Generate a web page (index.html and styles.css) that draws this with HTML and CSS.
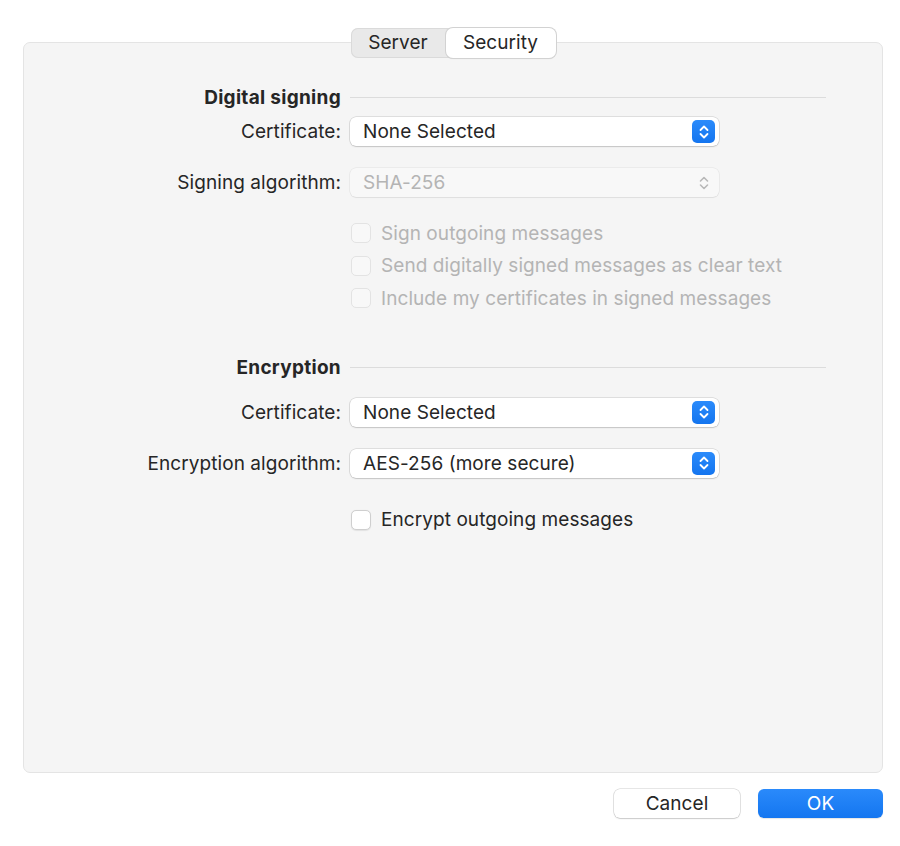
FILE: index.html
```html
<!DOCTYPE html>
<html>
<head>
<meta charset="utf-8">
<link rel="stylesheet" href="styles.css">
</head>
<body>
<div class="window">
  <div class="tabs">
    <div class="tab">Server</div>
    <div class="tab selected">Security</div>
  </div>
  <div class="box">
    <div class="form">
      <div class="section-title">Digital signing</div>
      <div class="rule"></div>

      <div class="label r-cert1">Certificate:</div>
      <div class="popup r-cert1"><span>None Selected</span><span class="stepper"><svg width="12" height="16" viewBox="0 0 12 16"><path d="M2.5 6 L6 2.5 L9.5 6 M2.5 10 L6 13.5 L9.5 10" fill="none" stroke="#fff" stroke-width="1.8" stroke-linecap="round" stroke-linejoin="round"/></svg></span></div>

      <div class="label r-sig">Signing algorithm:</div>
      <div class="popup disabled r-sig"><span>SHA-256</span><span class="stepper plain"><svg width="12" height="16" viewBox="0 0 12 16"><path d="M2.5 6 L6 2.5 L9.5 6 M2.5 10 L6 13.5 L9.5 10" fill="none" stroke="#b8b8b8" stroke-width="1.6" stroke-linecap="round" stroke-linejoin="round"/></svg></span></div>

      <div class="check disabled r-cb1"><span class="box-cb"></span>Sign outgoing messages</div>
      <div class="check disabled"><span class="box-cb"></span>Send digitally signed messages as clear text</div>
      <div class="check disabled"><span class="box-cb"></span>Include my certificates in signed messages</div>

      <div class="section-title r-enc">Encryption</div>
      <div class="rule r-enc"></div>

      <div class="label r-cert2">Certificate:</div>
      <div class="popup r-cert2"><span>None Selected</span><span class="stepper"><svg width="12" height="16" viewBox="0 0 12 16"><path d="M2.5 6 L6 2.5 L9.5 6 M2.5 10 L6 13.5 L9.5 10" fill="none" stroke="#fff" stroke-width="1.8" stroke-linecap="round" stroke-linejoin="round"/></svg></span></div>

      <div class="label r-alg">Encryption algorithm:</div>
      <div class="popup r-alg"><span>AES-256 (more secure)</span><span class="stepper"><svg width="12" height="16" viewBox="0 0 12 16"><path d="M2.5 6 L6 2.5 L9.5 6 M2.5 10 L6 13.5 L9.5 10" fill="none" stroke="#fff" stroke-width="1.8" stroke-linecap="round" stroke-linejoin="round"/></svg></span></div>

      <div class="check r-cb2"><span class="box-cb"></span>Encrypt outgoing messages</div>
    </div>
  </div>
  <div class="buttons">
    <div class="btn">Cancel</div>
    <div class="btn primary">OK</div>
  </div>
</div>
</body>
</html>
```

FILE: styles.css
```css
html, body {
  margin: 0;
  padding: 0;
  background: #ffffff;
}
body {
  font-family: Inter, "Liberation Sans", sans-serif;
  font-size: 19px;
  letter-spacing: 0.07px;
  color: #262626;
}
.window {
  width: 900px;
  height: 846px;
  box-sizing: border-box;
  padding: 28px 17px 0 23px;
  display: flex;
  flex-direction: column;
}
.tabs {
  align-self: center;
  display: flex;
  height: 30px;
  box-sizing: border-box;
  background: #e9e9e9;
  border-radius: 7px;
  box-shadow: inset 0 0 0 1px #dadada;
  margin-bottom: -16px;
  position: relative;
  z-index: 1;
}
.tab {
  display: flex;
  align-items: center;
  justify-content: center;
  width: 95px;
  line-height: 30px;
}
.tab.selected {
  width: 110px;
  background: #ffffff;
  border-radius: 7px;
  box-shadow: 0 0 0 1px #d2d2d2, 0 1px 1px rgba(0,0,0,0.12);
}
.box {
  height: 731px;
  box-sizing: border-box;
  background: #f5f5f5;
  border: 1px solid #e4e4e4;
  border-radius: 7px;
  padding: 43px 56px 0 0;
}
.form {
  display: grid;
  grid-template-columns: 317px 1fr;
  column-gap: 9px;
  align-items: center;
}
.section-title {
  grid-column: 1;
  font-weight: 700;
  letter-spacing: 0.3px;
  text-align: right;
  height: 24px;
  line-height: 24px;
}
.rule {
  grid-column: 2;
  height: 1px;
  background: #dcdcdc;
  margin-top: -1px;
}
.label {
  grid-column: 1;
  text-align: right;
}
.popup {
  grid-column: 2;
  width: 369px;
  height: 29px;
  box-sizing: border-box;
  background: #ffffff;
  border-radius: 6px;
  box-shadow: 0 0 0 0.5px rgba(0,0,0,0.18), 0 1px 1.5px rgba(0,0,0,0.12);
  display: flex;
  align-items: center;
  justify-content: space-between;
  padding: 0 4px 0 13px;
}
.stepper {
  width: 23px;
  height: 23px;
  border-radius: 5px;
  background: linear-gradient(#2b8bfb, #1475ef);
  display: flex;
  align-items: center;
  justify-content: center;
}
.stepper.plain {
  background: none;
}
.popup.disabled {
  background: #f8f8f8;
  color: #b4b4b4;
  box-shadow: 0 0 0 0.5px rgba(0,0,0,0.08), 0 1px 1px rgba(0,0,0,0.05);
}
.check {
  grid-column: 2;
  display: flex;
  align-items: center;
  height: 32.5px;
}
.box-cb {
  width: 20px;
  height: 20px;
  box-sizing: border-box;
  border-radius: 5px;
  background: #ffffff;
  border: 1px solid #cfcfcf;
  box-shadow: 0 0.5px 1px rgba(0,0,0,0.08);
  margin-right: 10px;
  margin-left: 1px;
}
.check.disabled {
  color: #b4b4b4;
}
.check.disabled .box-cb {
  background: #f8f8f8;
  border-color: #e3e3e3;
  box-shadow: none;
}
.r-cert1 { margin-top: 7px; }
.r-sig { margin-top: 22px; }
.r-cb1 { margin-top: 20px; }
.r-enc { margin-top: 41px; }
.r-cert2 { margin-top: 18px; }
.r-alg { margin-top: 22px; }
.r-cb2 { margin-top: 26px; }
.buttons {
  display: flex;
  justify-content: flex-end;
  gap: 18px;
  margin-top: 16px;
}
.btn {
  width: 126px;
  height: 29px;
  box-sizing: border-box;
  border-radius: 6px;
  background: #ffffff;
  box-shadow: 0 0 0 0.5px rgba(0,0,0,0.2), 0 1px 1.5px rgba(0,0,0,0.12);
  display: flex;
  align-items: center;
  justify-content: center;
}
.btn.primary {
  width: 125px;
  background: linear-gradient(#2a8afb, #1476f0);
  color: #ffffff;
  box-shadow: 0 1px 1px rgba(0,0,0,0.1);
}
```
